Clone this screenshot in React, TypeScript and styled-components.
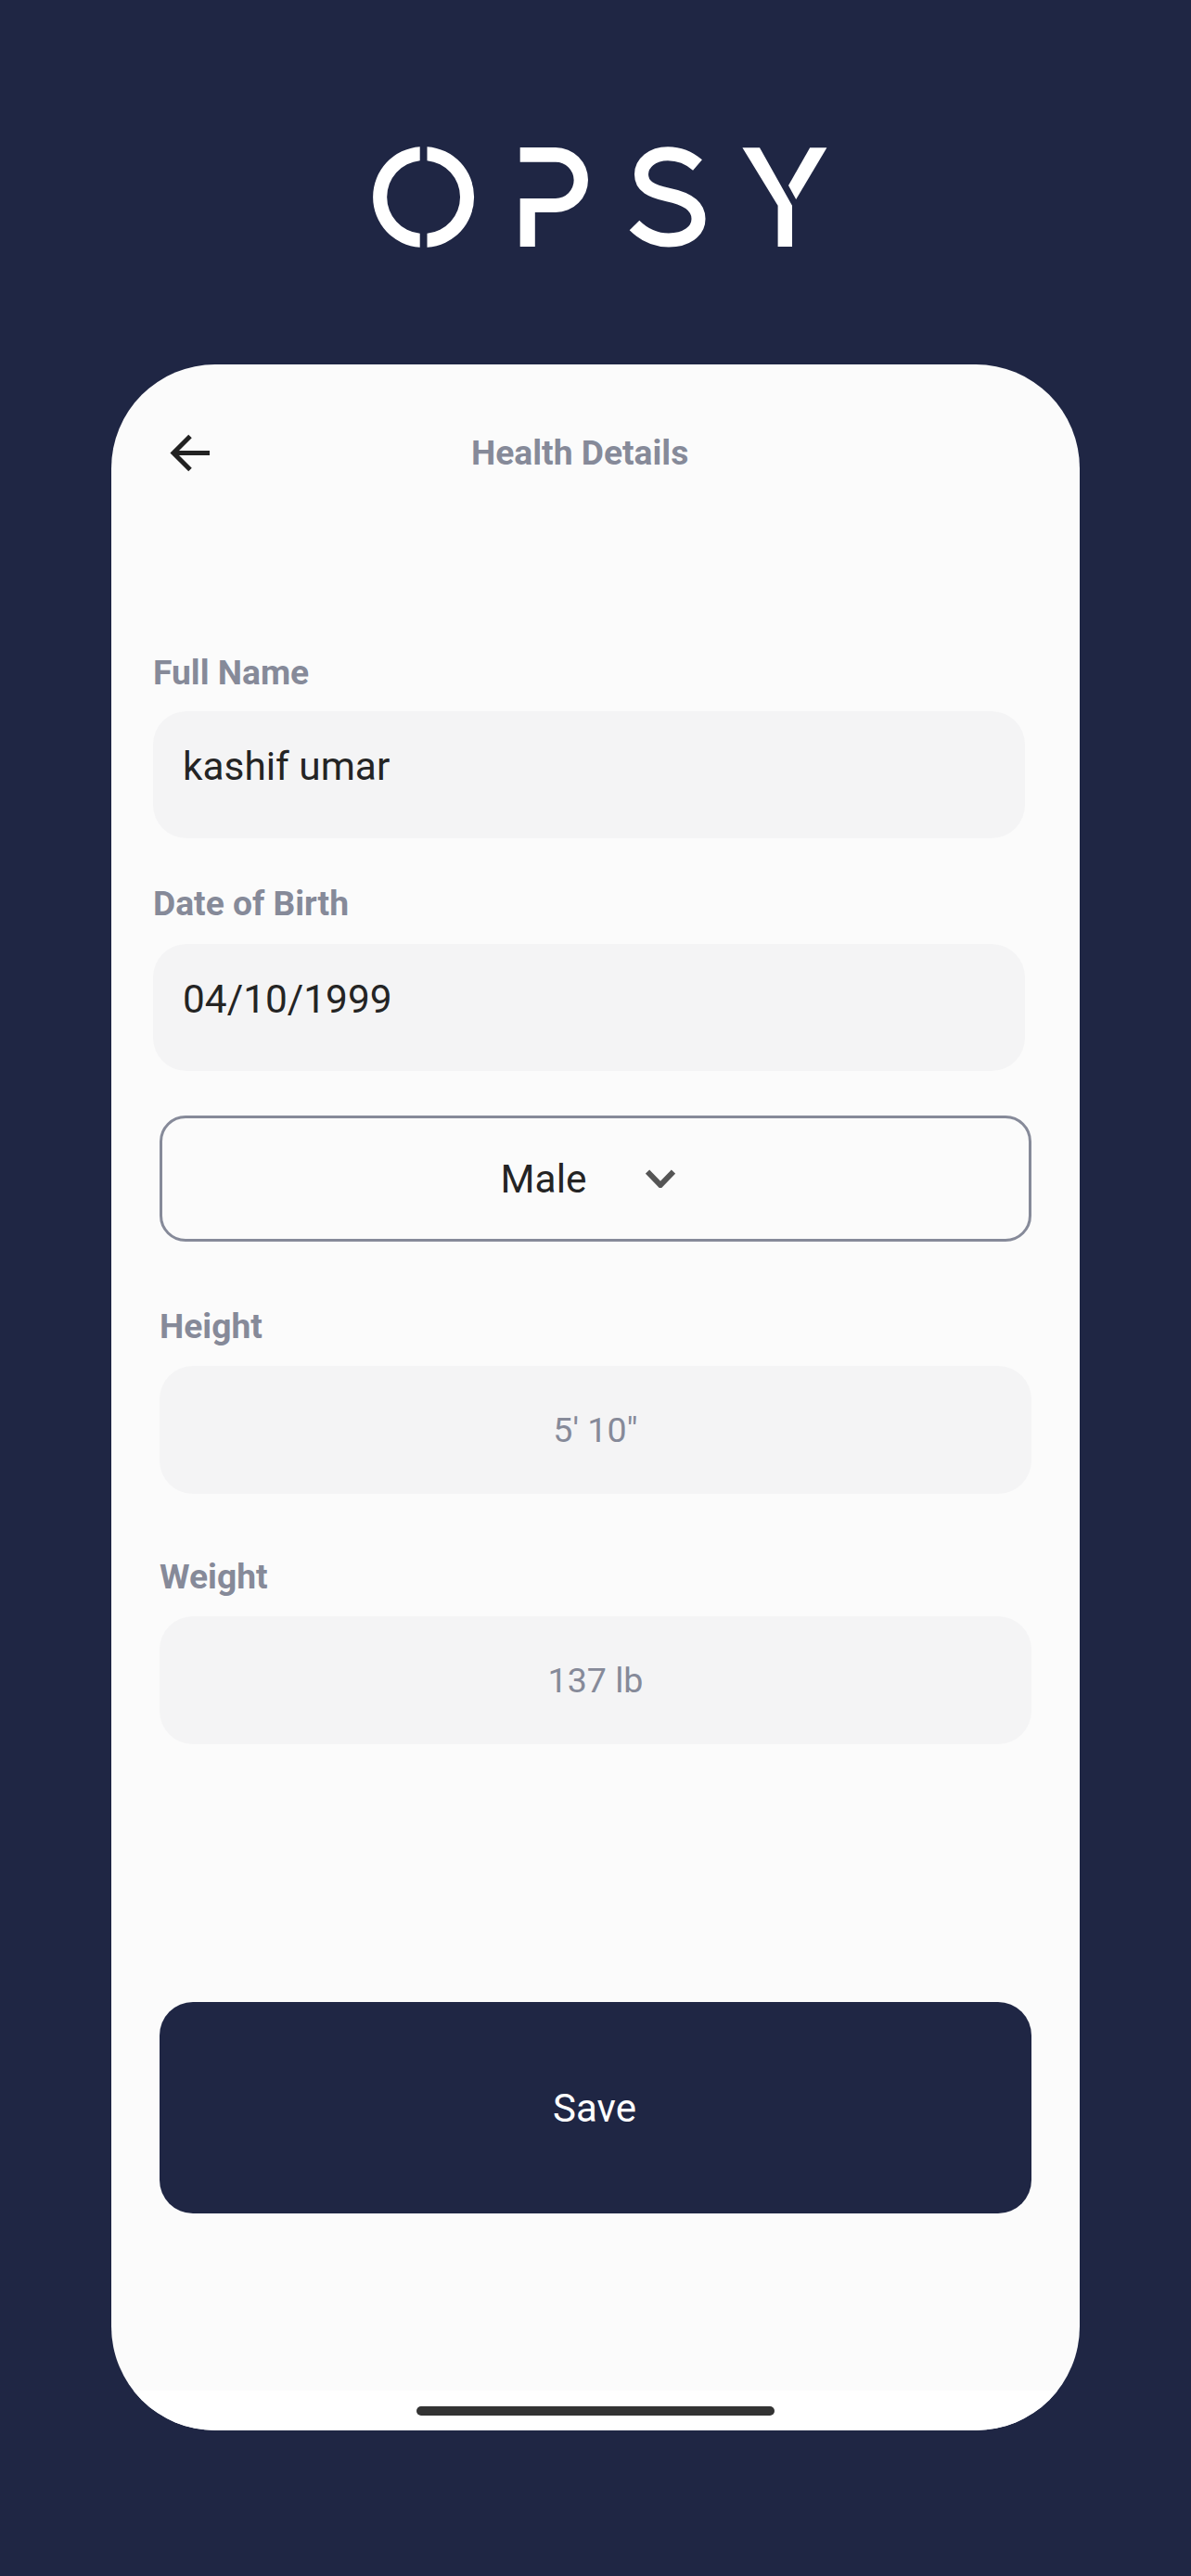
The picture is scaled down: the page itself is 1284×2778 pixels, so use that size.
import React from "react";
import styled, { createGlobalStyle } from "styled-components";

const Global = createGlobalStyle`
  html, body { margin: 0; padding: 0; background: #1f2644; }
  * { box-sizing: border-box; }
`;

const Page = styled.div`
  width: 1284px;
  height: 2778px;
  background: #1f2644;
  padding-top: 158px;
  display: flex;
  flex-direction: column;
  align-items: center;
  font-family: Roboto, "Liberation Sans", sans-serif;
  overflow: hidden;
`;

const Logo = styled.svg`
  display: block;
  width: 490px;
  height: 109px;
  margin-left: 10px;
  fill: #fff;
  flex: none;
`;

const Card = styled.main`
  margin-top: 126px;
  width: 1044px;
  height: 2228px;
  border-radius: 112px;
  background: #fbfbfb;
  overflow: hidden;
  display: flex;
  flex-direction: column;
  flex: none;
`;

const Header = styled.header`
  height: 96px;
  margin-top: 48px;
  padding-left: 63px;
  display: flex;
  align-items: center;
`;

const BackIcon = styled.svg`
  width: 44px;
  height: 42px;
  flex: none;
  fill: none;
  stroke: #222;
  stroke-width: 5;
`;

const Title = styled.h1`
  margin: -2px 0 0 281px;
  font-size: 37.2px;
  line-height: 44px;
  font-weight: 700;
  color: #868a99;
`;

const Form = styled.form`
  flex: 1;
  padding: 166px 59px 0 45px;
  display: flex;
  flex-direction: column;
`;

const Field = styled.div<{ $inset?: boolean; $gap: number; $top: number }>`
  margin-left: ${(p) => (p.$inset ? 7 : 0)}px;
  margin-right: ${(p) => (p.$inset ? -7 : 0)}px;
  margin-top: ${(p) => p.$top}px;
  display: flex;
  flex-direction: column;
  gap: ${(p) => p.$gap}px;
`;

const Label = styled.label`
  font-size: 37.2px;
  line-height: 44px;
  font-weight: 700;
  color: #868a99;
`;

const InputBox = styled.div`
  height: 137px;
  border-radius: 36px;
  background: #f4f4f5;
  padding: 31px 32px 0;
  font-size: 42.4px;
  line-height: 58px;
  color: #242424;
`;

const ReadOnlyBox = styled.div`
  height: 138px;
  border-radius: 36px;
  background: #f4f4f5;
  display: flex;
  align-items: center;
  justify-content: center;
  font-size: 37.6px;
  color: #868a99;
`;

const Select = styled.div`
  height: 136px;
  margin-top: 48px;
  margin-left: 7px;
  margin-right: -7px;
  border: 3px solid #868a99;
  border-radius: 28px;
  display: flex;
  align-items: center;
  justify-content: center;
  gap: 64px;
  font-size: 42.4px;
  color: #242424;
`;

const Chevron = styled.svg`
  width: 32px;
  height: 20px;
  margin-right: 16px;
  fill: none;
  stroke: #555;
  stroke-width: 6;
`;

const SaveButton = styled.button`
  margin-top: 278px;
  margin-left: 7px;
  margin-right: -7px;
  height: 228px;
  border: 0;
  border-radius: 36px;
  background: #1f2644;
  color: #fff;
  font-family: inherit;
  font-size: 42px;
  padding: 0 2px 0 0;
`;

const HomeArea = styled.div`
  height: 43px;
  background: #fff;
  display: flex;
  justify-content: center;
  padding-top: 17px;
  flex: none;
`;

const HomeBar = styled.div`
  width: 386px;
  height: 10px;
  border-radius: 5px;
  background: #333;
`;

export default function App() {
  return (
    <Page>
      <Global />
      <Logo viewBox="0 0 490 109" role="img" aria-label="OPSY">
        <path d="M50.7 .14A54.5 54.5 0 0 0 50.7 108.86V93.8A39.5 39.5 0 0 1 50.7 15.2Z" />
        <path d="M58.5 .14A54.5 54.5 0 0 1 58.5 108.86V93.8A39.5 39.5 0 0 0 58.5 15.2Z" />
        <path d="M158.7 1H197A35 35 0 0 1 197 71H174.8V108H158.7V56H197A19.65 19.65 0 0 0 197 16.7H158.7Z" />
        <path
          d="M350 20C342 13 331 7.7 318 7.7C301 7.7 289.5 18 289.5 30C289.5 43 300 48 318 52C338 56 351 64 351 78C351 92 337 101 319 101C304 101 291 94 282 85"
          fill="none"
          stroke="#fff"
          strokeWidth="15"
        />
        <path d="M398.4 1.3H417L452 63.7V108H436.6V63.7Z" />
        <path d="M471.2 1.3H489.4L456.2 57L448 42Z" />
      </Logo>
      <Card>
        <Header>
          <BackIcon viewBox="0 0 44 42">
            <path d="M43 20.5H4M22 2.5L4 20.5L22 38.5" />
          </BackIcon>
          <Title>Health Details</Title>
        </Header>
        <Form>
          <Field $gap={20} $top={0}>
            <Label>Full Name</Label>
            <InputBox>kashif umar</InputBox>
          </Field>
          <Field $gap={22} $top={48}>
            <Label>Date of Birth</Label>
            <InputBox>04/10/1999</InputBox>
          </Field>
          <Select>
            Male
            <Chevron viewBox="0 0 32 20">
              <path d="M2 2.5L16 17L30 2.5" />
            </Chevron>
          </Select>
          <Field $inset $gap={21} $top={69}>
            <Label>Height</Label>
            <ReadOnlyBox>5' 10"</ReadOnlyBox>
          </Field>
          <Field $inset $gap={21} $top={67}>
            <Label>Weight</Label>
            <ReadOnlyBox>137 lb</ReadOnlyBox>
          </Field>
          <SaveButton type="button">Save</SaveButton>
        </Form>
        <HomeArea>
          <HomeBar />
        </HomeArea>
      </Card>
    </Page>
  );
}
